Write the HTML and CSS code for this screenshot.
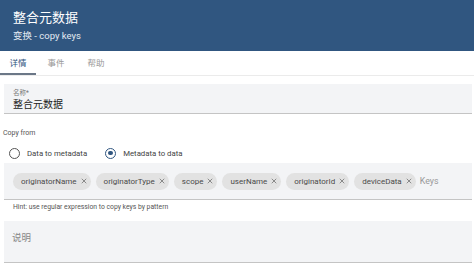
FILE: index.html
```html
<!DOCTYPE html>
<html lang="zh">
<head>
    <meta charset="UTF-8">
    <meta name="viewport" content="width=device-width, initial-scale=1.0">
    <title>整合元数据</title>
    <link rel="stylesheet" href="styles.css">
</head>
<body>
    <!-- Dialog header -->
    <div class="header">
        <div class="title">整合元数据</div>
        <div class="subtitle">变换 - copy keys</div>
    </div>

    <!-- Tabs -->
    <div class="tabs">
        <div class="tab active">详情</div>
        <div class="tab">事件</div>
        <div class="tab">帮助</div>
    </div>

    <div class="content">
        <div class="field name-field">
            <div class="field-label">名称*</div>
            <div class="field-value">整合元数据</div>
        </div>

        <div class="section-label">Copy from</div>
        <div class="radio-row">
            <label class="radio">
                <span class="radio-circle"></span>
                Data to metadata
            </label>
            <label class="radio checked">
                <span class="radio-circle"></span>
                Metadata to data
            </label>
        </div>

        <div class="field chips-field">
            <span class="chip">originatorName <svg class="chip-x" viewBox="0 0 8 8"><path d="M1 1L7 7M7 1L1 7"/></svg></span>
            <span class="chip">originatorType <svg class="chip-x" viewBox="0 0 8 8"><path d="M1 1L7 7M7 1L1 7"/></svg></span>
            <span class="chip">scope <svg class="chip-x" viewBox="0 0 8 8"><path d="M1 1L7 7M7 1L1 7"/></svg></span>
            <span class="chip">userName <svg class="chip-x" viewBox="0 0 8 8"><path d="M1 1L7 7M7 1L1 7"/></svg></span>
            <span class="chip">originatorId <svg class="chip-x" viewBox="0 0 8 8"><path d="M1 1L7 7M7 1L1 7"/></svg></span>
            <span class="chip">deviceData <svg class="chip-x" viewBox="0 0 8 8"><path d="M1 1L7 7M7 1L1 7"/></svg></span>
            <span class="placeholder">Keys</span>
        </div>
        <div class="hint">Hint: use regular expression to copy keys by pattern</div>

        <div class="field desc-field">
            <div class="placeholder-cn">说明</div>
        </div>
    </div>
</body>
</html>
```

FILE: styles.css
```css
body {
    margin: 0;
    font-family: Roboto, "Noto Sans CJK SC", sans-serif;
    color: #333;
    background: #fff;
}
.header {
    background-color: #305680;
    height: 51px;
    padding-left: 13px;
    color: #fff;
    box-sizing: border-box;
    padding-top: 9px;
}
.title {
    font-size: 13px;
    line-height: 18px;
}
.subtitle {
    font-size: 9.5px;
    line-height: 14px;
    margin-top: 2px;
    color: #e4ebf3;
}
.tabs {
    display: flex;
    height: 25px;
    border-bottom: 1px solid #ebebeb;
    box-sizing: border-box;
}
.tab {
    width: 40px;
    text-align: center;
    font-size: 8.5px;
    line-height: 24px;
    color: #999;
    box-sizing: border-box;
}
.tab.active {
    width: 36px;
    color: #305680;
    border-bottom: 2px solid #6b7787;
}
.content {
    padding: 0 2px 0 4px;
}
.field {
    background-color: #f3f4f6;
    border-bottom: 1px solid #c4c4c4;
    box-sizing: border-box;
}
.name-field {
    margin-top: 8px;
    height: 30px;
    padding: 5px 0 0 9px;
}
.field-label {
    font-size: 6.5px;
    line-height: 8px;
    color: #777;
}
.field-value {
    font-size: 10px;
    line-height: 14px;
    margin-top: 1px;
    color: #222;
}
.section-label {
    font-size: 7px;
    line-height: 10px;
    color: #555;
    margin: 14px 0 0 -1px;
}
.radio-row {
    display: flex;
    align-items: center;
    height: 20px;
    margin-top: 5px;
    gap: 13px;
}
.radio {
    display: flex;
    align-items: center;
    gap: 7px;
    font-size: 7.8px;
    color: #444;
    padding-left: 5px;
}
.radio-circle {
    width: 11px;
    height: 11px;
    border: 1.3px solid #555;
    border-radius: 50%;
    box-sizing: border-box;
    position: relative;
}
.radio.checked .radio-circle {
    border-color: #305680;
}
.radio.checked .radio-circle::after {
    content: "";
    position: absolute;
    left: 2px;
    top: 2px;
    width: 4.4px;
    height: 4.4px;
    border-radius: 50%;
    background: #305680;
}
.chips-field {
    height: 37px;
    display: flex;
    align-items: center;
    gap: 5px;
    padding-left: 9px;
}
.chip {
    display: flex;
    align-items: center;
    height: 17px;
    border-radius: 9px;
    background-color: #e2e2e2;
    font-size: 8px;
    color: #4a4a4a;
    padding: 0 4px 0 8px;
    gap: 4px;
}
.chip-x {
    width: 6px;
    height: 6px;
    stroke: #777;
    stroke-width: 1.1;
    fill: none;
}
.placeholder {
    font-size: 8.8px;
    color: #999;
    margin-left: -1px;
}
.hint {
    font-size: 6.8px;
    line-height: 10px;
    color: #555;
    padding-left: 9px;
    margin-top: 2px;
}
.desc-field {
    margin-top: 9px;
    height: 42px;
    padding: 10px 0 0 8px;
}
.placeholder-cn {
    font-size: 9.5px;
    line-height: 14px;
    color: #888;
}
```
